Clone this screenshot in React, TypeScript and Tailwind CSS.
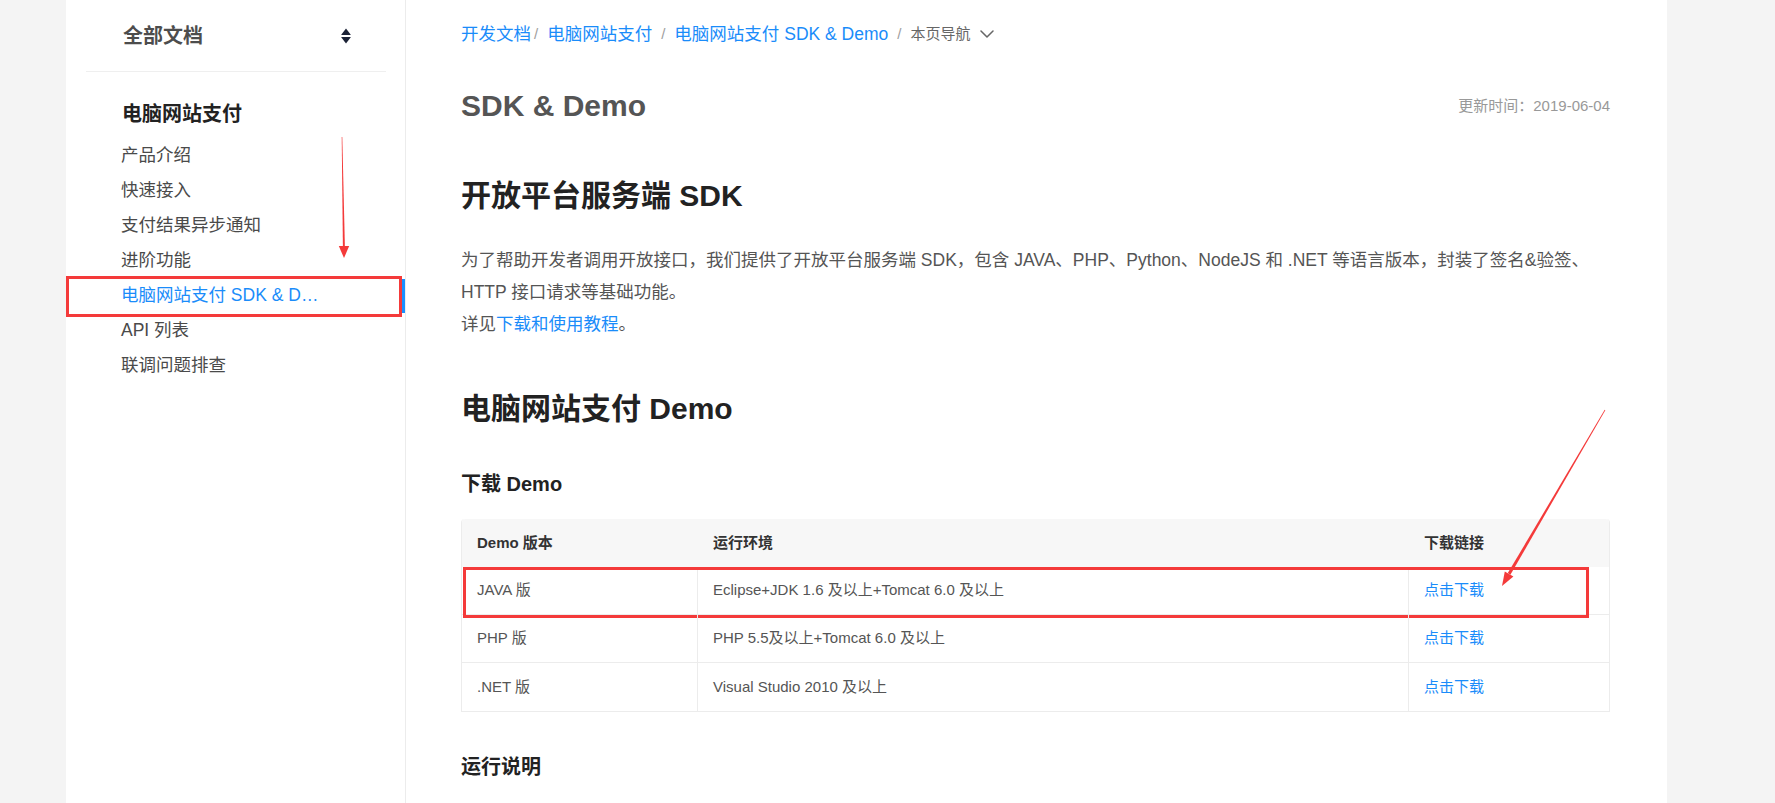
import React from "react";

const navItems = [
  "产品介绍",
  "快速接入",
  "支付结果异步通知",
  "进阶功能",
  "电脑网站支付 SDK & Demo",
  "API 列表",
  "联调问题排查",
];
const activeIndex = 4;

const demoRows = [
  { name: "JAVA 版", env: "Eclipse+JDK 1.6 及以上+Tomcat 6.0 及以上", marked: true },
  { name: "PHP 版", env: "PHP 5.5及以上+Tomcat 6.0 及以上", marked: false },
  { name: ".NET 版", env: "Visual Studio 2010 及以上", marked: false },
];

function SortIcon() {
  return (
    <svg width="10" height="16" viewBox="0 0 10 16" fill="#1b2236">
      <path d="M5 0.6 L9.6 6.4 Q9.8 6.9 9.2 6.9 L0.8 6.9 Q0.2 6.9 0.4 6.4 Z" />
      <path d="M0.8 9.1 L9.2 9.1 Q9.8 9.1 9.6 9.6 L5 15.4 L0.4 9.6 Q0.2 9.1 0.8 9.1 Z" />
    </svg>
  );
}

function Chevron() {
  return (
    <svg width="14" height="8" viewBox="0 0 14 8" fill="none" className="ml-[10px]">
      <polyline points="1,1 7,7 13,1" stroke="#666" strokeWidth="1.5" strokeLinecap="round" strokeLinejoin="round" />
    </svg>
  );
}

function Sidebar() {
  return (
    <aside className="w-[340px] shrink-0 border-r border-[#ececec]">
      <div className="flex h-[71px] items-center justify-between pl-[57px] pr-[54px]">
        <span className="text-[20px] font-bold text-[#4d4d4d]">全部文档</span>
        <SortIcon />
      </div>
      <div className="ml-[20px] mr-[19px] h-px bg-[#efefef]" />
      <div className="pt-[25px]">
        <div className="h-[35px] pl-[56px] text-[20px] font-bold leading-[35px] text-[#222]">
          电脑网站支付
        </div>
        <ul className="mt-[6px]">
          {navItems.map((label, i) =>
            i === activeIndex ? (
              <li key={label} className="relative h-[35px] pl-[55px] text-[17.5px] leading-[35px] text-[#1a8cfa]">
                <span className="block w-[200px] truncate">{label}</span>
                <span className="absolute right-0 top-[1px] h-[34px] w-[3px] bg-[#1890ff]" />
                <span className="absolute left-0 top-[-2px] h-[41px] w-[336px] border-[3px] border-[#f43a3a]" />
              </li>
            ) : (
              <li key={label} className="h-[35px] pl-[55px] text-[17.5px] leading-[35px] text-[#4a4a4a]">
                {label}
              </li>
            )
          )}
        </ul>
      </div>
    </aside>
  );
}

function DemoTable() {
  return (
    <div className="mt-[20px] rounded-t-[4px] border-x border-b border-[#ececec] text-[15px]">
      <div className="grid h-[48px] grid-cols-[235px_711px_1fr] items-center rounded-t-[4px] bg-[#f7f7f7] font-semibold text-[#333]">
        <div className="pl-[15px]">Demo 版本</div>
        <div className="pl-[16px]">运行环境</div>
        <div className="pl-[16px]">下载链接</div>
      </div>
      {demoRows.map((row, i) => (
        <div
          key={row.name}
          className={
            i === demoRows.length - 1
              ? "relative grid h-[48px] grid-cols-[235px_711px_1fr] text-[#555]"
              : "relative grid h-[48px] grid-cols-[235px_711px_1fr] border-b border-[#ececec] text-[#555]"
          }
        >
          <div className="flex items-center pl-[15px]">{row.name}</div>
          <div className="flex items-center border-l border-[#ececec] pl-[15px]">{row.env}</div>
          <div className="flex items-center border-l border-[#ececec] pl-[15px]">
            <a className="text-[#1a8cfa]">点击下载</a>
          </div>
          {row.marked && (
            <span className="absolute left-[1px] top-0 h-[51px] w-[1126px] border-[3px] border-[#f43a3a]" />
          )}
        </div>
      ))}
    </div>
  );
}

function Main() {
  return (
    <main className="min-w-0 flex-1 pl-[55px] pr-[57px] pt-[22px] text-[#555]">
      <nav className="flex h-[24px] items-center text-[17.5px] leading-[24px]">
        <a className="text-[#1a8cfa]">开发文档</a>
        <span className="ml-[3px] mr-[9px] text-[15px] text-[#a0a0a0]">/</span>
        <a className="text-[#1a8cfa]">电脑网站支付</a>
        <span className="mx-[9px] text-[15px] text-[#a0a0a0]">/</span>
        <a className="text-[#1a8cfa]">电脑网站支付 SDK &amp; Demo</a>
        <span className="mx-[9px] text-[15px] text-[#a0a0a0]">/</span>
        <span className="text-[15px] text-[#666]">本页导航</span>
        <Chevron />
      </nav>

      <div className="mt-[40px] flex h-[40px] items-center justify-between">
        <h1 className="text-[30px] font-bold leading-[40px] text-[#555]">SDK &amp; Demo</h1>
        <span className="text-[15px] text-[#999]">更新时间：2019-06-04</span>
      </div>

      <h2 className="mt-[50px] h-[40px] text-[30px] font-bold leading-[40px] text-[#222]">开放平台服务端 SDK</h2>

      <p className="mt-[28px] text-[17.5px] leading-[32px] text-[#555]">
        为了帮助开发者调用开放接口，我们提供了开放平台服务端 SDK，包含 JAVA、PHP、Python、NodeJS 和 .NET 等语言版本，封装了签名&amp;验签、
        <br />
        HTTP 接口请求等基础功能。
        <br />
        详见<a className="text-[#1a8cfa]">下载和使用教程</a>。
      </p>

      <h2 className="mt-[49px] h-[40px] text-[30px] font-bold leading-[40px] text-[#222]">电脑网站支付 Demo</h2>

      <h3 className="mt-[40px] h-[30px] text-[20px] font-bold leading-[30px] text-[#222]">下载 Demo</h3>

      <DemoTable />

      <h3 className="mt-[40px] h-[30px] text-[20px] font-bold leading-[30px] text-[#222]">运行说明</h3>
    </main>
  );
}

function Annotations() {
  return (
    <svg
      className="pointer-events-none absolute left-0 top-0"
      width="1775"
      height="803"
      viewBox="0 0 1775 803"
    >
      {/* arrow pointing at the sidebar entry */}
      <polygon points="342.3,137 341.7,137 342.9,247 344.9,247" fill="#f43a3a" />
      <polygon points="338.8,246 349.2,246 344,258" fill="#f43a3a" />
      {/* arrow pointing at the download link */}
      <polygon points="1605.3,410.2 1604.7,409.8 1507.8,573.1 1510.4,574.7" fill="#f43a3a" />
      <polygon points="1513.4,576.4 1504.8,571.4 1502,586" fill="#f43a3a" />
    </svg>
  );
}

export default function App() {
  return (
    <div className="relative flex h-[803px] w-[1775px] overflow-hidden bg-[#f4f4f4] font-['Liberation_Sans','Noto_Sans_CJK_SC',sans-serif]">
      <div className="w-[66px] shrink-0" />
      <div className="flex w-[1601px] shrink-0 bg-white">
        <Sidebar />
        <Main />
      </div>
      <Annotations />
    </div>
  );
}
